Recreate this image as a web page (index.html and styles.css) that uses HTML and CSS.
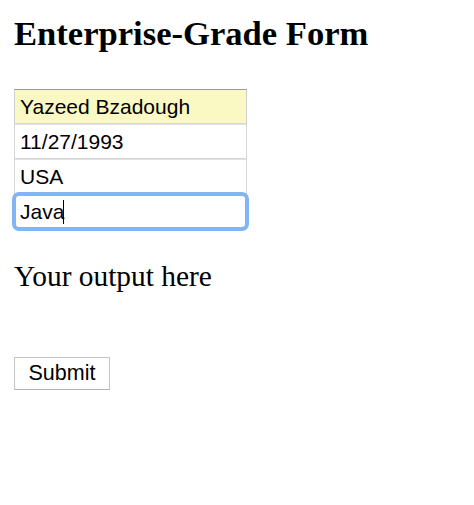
FILE: index.html
```html
<!DOCTYPE html>
<html lang="en">
<head>
<meta charset="utf-8">
<title>Enterprise-Grade Form</title>
<link rel="stylesheet" href="styles.css">
</head>
<body>
<main class="page">
  <h1 class="title">Enterprise-Grade Form</h1>
  <form class="form">
    <input class="field field-autofill" type="text" value="Yazeed Bzadough">
    <input class="field" type="text" value="11/27/1993">
    <input class="field" type="text" value="USA">
    <div class="field-wrap">
      <input class="field field-focus" type="text" value="Java">
      <span class="caret"></span>
    </div>
  </form>
  <p class="output">Your output here</p>
  <button class="submit" type="button">Submit</button>
</main>
</body>
</html>
```
FILE: styles.css
```css
html, body {
  margin: 0;
  padding: 0;
  background: #ffffff;
}

.page {
  padding: 16px 14px;
  font-family: "Liberation Serif", "Times New Roman", serif;
  color: #000;
}

.title {
  margin: 0;
  font-size: 34.6px;
  line-height: 34.5px;
  font-weight: bold;
}

.form {
  margin-top: 38.5px;
  display: flex;
  flex-direction: column;
  width: 233px;
}

.field {
  display: block;
  box-sizing: border-box;
  width: 233px;
  height: 35px;
  margin: 0;
  padding: 0 5px;
  font-family: "Liberation Sans", Arial, sans-serif;
  font-size: 21px;
  color: #000;
  background: #fff;
  border: 1px solid #d6d6d6;
  border-top-color: #e2e2e2;
  border-radius: 0;
  outline: none;
}

.field-autofill {
  background: #fbf9c3;
  border-top-color: #9a9a9a;
  border-left-color: #cfcfcf;
  border-right-color: #cfcfcf;
}

.field-wrap {
  position: relative;
}

.field-focus {
  outline: 4px solid #84b5f3;
  outline-offset: -2px;
  border-radius: 5px;
  border-color: #84b5f3;
}

.caret {
  position: absolute;
  left: 49px;
  top: 6px;
  width: 1px;
  height: 24px;
  background: #000;
}

.output {
  margin: 32.7px 0 0;
  font-size: 29.4px;
  line-height: 29px;
}

.submit {
  display: block;
  box-sizing: border-box;
  margin-top: 66.3px;
  width: 96px;
  height: 33px;
  padding: 0;
  font-family: "Liberation Sans", Arial, sans-serif;
  font-size: 21.5px;
  color: #000;
  background: #fff;
  border: 1px solid #c4c4c4;
  border-bottom-color: #b4b4b4;
  border-radius: 0;
}
```
